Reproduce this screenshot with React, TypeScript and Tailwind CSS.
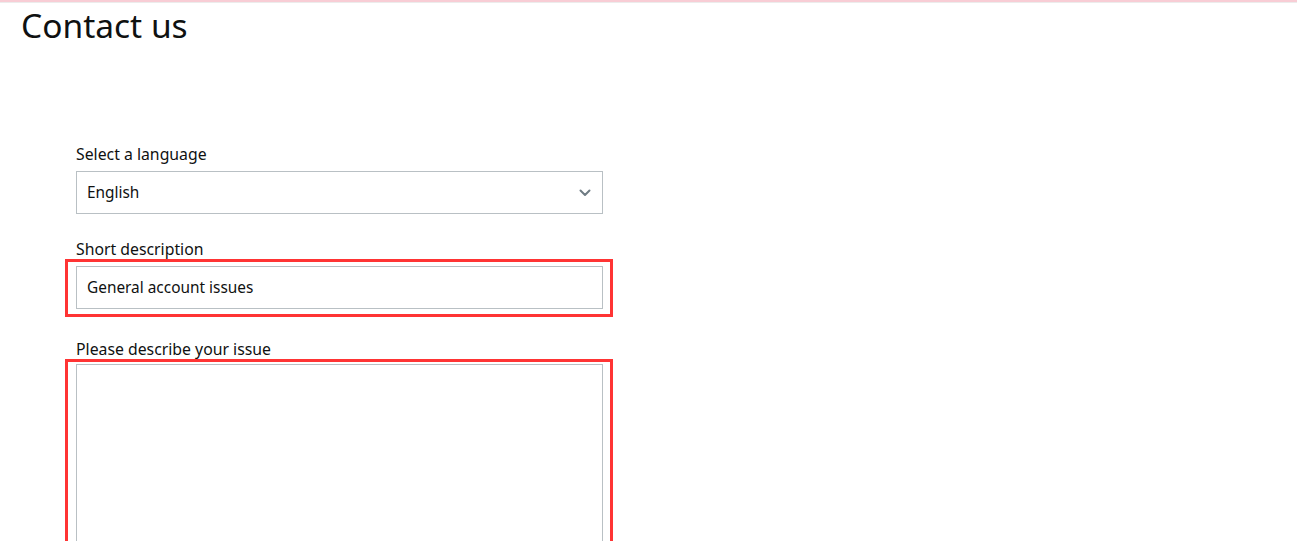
export default function App() {
  return (
    <div className="min-h-screen bg-white text-[#0f1111]" style={{ fontFamily: '"Noto Sans", Arial, sans-serif' }}>
      <div className="h-[2px] bg-[#f8cdd5]" />
      <div className="h-[1px] bg-[#ececec]" />

      <h1 className="ml-[21px] mt-[0px] text-[33.5px] leading-[44px] font-normal">Contact us</h1>

      <main className="ml-[76px] mt-[97px] w-[527px]">
        <label className="block text-[15.8px] leading-[20px]">Select a language</label>
        <div className="mt-[7px] flex h-[43px] items-center justify-between border border-[#b9c0c4] px-[10px] text-[15.4px]">
          <span>English</span>
          <svg width="12" height="8" viewBox="0 0 12 8" fill="none" className="mr-[1px]">
            <path d="M1.5 1.5 6 6 10.5 1.5" stroke="#6f7c84" strokeWidth="2" strokeLinecap="round" strokeLinejoin="round" />
          </svg>
        </div>

        <label className="mt-[25px] block text-[15.8px] leading-[20px]">Short description</label>
        <div className="-ml-[11px] -mr-[10px] border-[3px] border-[#ff3434] pb-[5px] pl-[8px] pr-[7px] pt-[4px]">
          <div className="flex h-[43px] items-center border border-[#b9c0c4] px-[10px] text-[15.4px]">
            General account issues
          </div>
        </div>

        <label className="mt-[22px] block text-[15.8px] leading-[20px]">Please describe your issue</label>
        <div className="-ml-[11px] -mr-[10px] border-[3px] border-[#ff3434] pb-[5px] pl-[8px] pr-[7px] pt-[2px]">
          <textarea className="block h-[200px] w-full resize-none border border-[#b9c0c4] outline-none" />
        </div>
      </main>
    </div>
  );
}
